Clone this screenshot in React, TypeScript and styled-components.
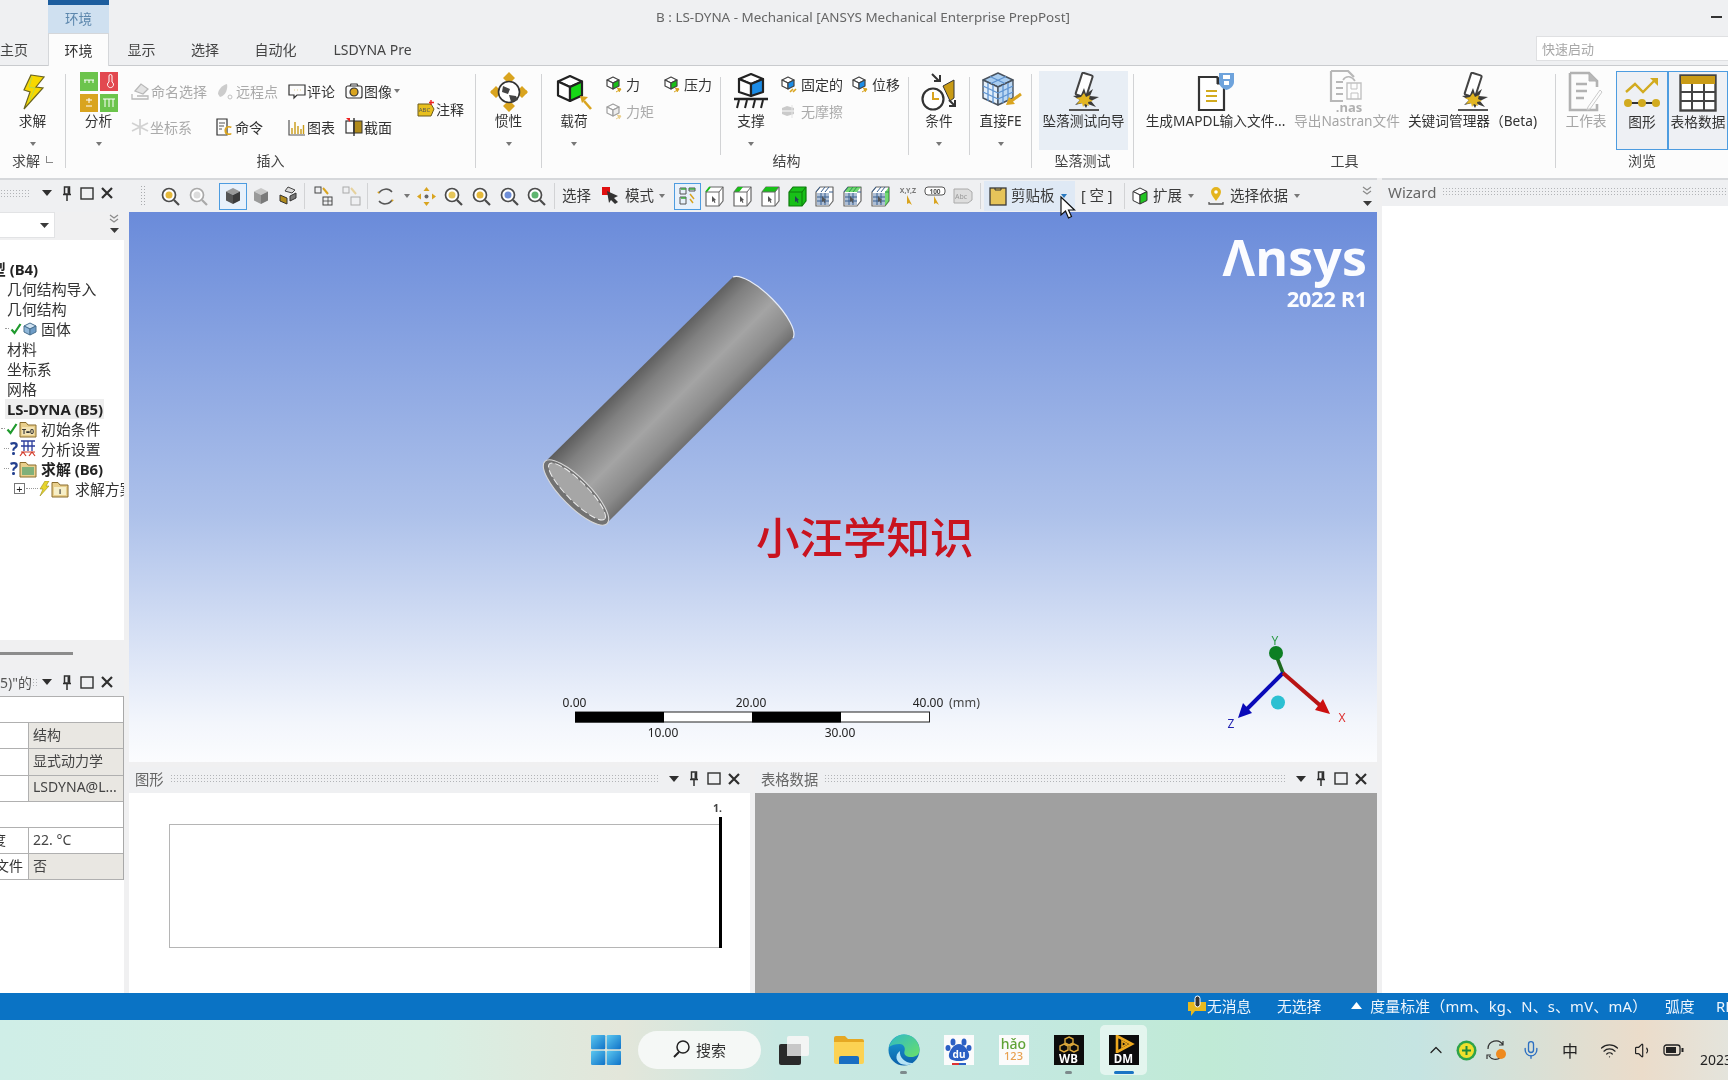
import React from "react";
import styled, { createGlobalStyle } from "styled-components";
import { ChevronUp, Mic, Volume1, Wifi } from "lucide-react";

const FONT = `"Noto Sans", "Noto Sans CJK SC", sans-serif`;

const GlobalStyle = createGlobalStyle`
  html, body { margin: 0; padding: 0; overflow: hidden; background: #eff0f2; }
  * { box-sizing: border-box; }
  body { font-family: ${FONT}; }
  svg { display: block; flex: none; }
`;

/* ---------- page shell ---------- */
const Page = styled.div`
  position: relative;
  width: 1728px;
  height: 1080px;
  display: flex;
  flex-direction: column;
  overflow: hidden;
  background: #eff0f2;
  color: #333;
  filter: blur(0.35px);
`;

const TitleBar = styled.div`
  display: grid;
  grid-template-columns: 48px 61px 1508px 111px;
  height: 33px;
  background: #eff0f2;
`;

const ContextTab = styled.div`
  grid-column: 2;
  display: flex;
  align-items: center;
  justify-content: center;
  padding-bottom: 2px;
  border-top: 5px solid #1c5d9e;
  background: #cfe0f0;
  color: #5d87ad;
  font-size: 13.5px;
`;

const WindowTitle = styled.div`
  display: flex;
  align-items: center;
  justify-content: center;
  color: #666;
  font-size: 13.45px;
`;

const MinDash = styled.div`
  justify-self: end;
  align-self: center;
  width: 11px;
  height: 2px;
  margin-right: 6px;
  background: #333;
`;

const TabRow = styled.div`
  display: flex;
  height: 33px;
  border-bottom: 1px solid #c9cbce;
`;

const Tab = styled.div<{ $w: number; $active?: boolean; $start?: boolean }>`
  width: ${(p) => p.$w}px;
  height: ${(p) => (p.$active ? 33 : 32)}px;
  display: flex;
  align-items: center;
  justify-content: ${(p) => (p.$start ? "flex-start" : "center")};
  font-size: 14px;
  color: #444;
  background: ${(p) => (p.$active ? "#fcfcfc" : "transparent")};
  ${(p) => p.$active && "border: 1px solid #d5d7da; border-bottom: none; color: #333;"}
`;

const QuickStart = styled.div`
  margin: 3px 0 0 auto;
  width: 192px;
  height: 25px;
  padding-left: 5px;
  display: flex;
  align-items: center;
  background: #fff;
  border: 1px solid #dfe0e2;
  border-right: none;
  color: #a8a8a8;
  font-size: 13px;
`;

/* ---------- ribbon ---------- */
const Ribbon = styled.div`
  display: flex;
  height: 112px;
  background: #fcfcfc;
  overflow: hidden;
`;

const RibbonGroup = styled.div<{ $w: number }>`
  width: ${(p) => p.$w}px;
  flex: none;
  display: flex;
  flex-direction: column;
`;

const GroupBody = styled.div`
  display: flex;
  height: 84px;
  padding-top: 5px;
`;

const GroupLabel = styled.div`
  height: 22px;
  padding-bottom: 3px;
  display: flex;
  align-items: center;
  justify-content: center;
  gap: 6px;
  font-size: 14px;
  color: #444;
`;

const RibbonSep = styled.div<{ $short?: boolean }>`
  flex: none;
  width: 1px;
  margin-top: ${(p) => (p.$short ? 6 : 8)}px;
  height: ${(p) => (p.$short ? 78 : 94)}px;
  background: #d2d3d5;
`;

const LargeButton = styled.div<{ $w: number; $ml?: number; $off?: boolean; $hl?: boolean; $sel?: boolean }>`
  width: ${(p) => p.$w}px;
  margin-left: ${(p) => p.$ml ?? 0}px;
  height: 79px;
  flex: none;
  display: flex;
  flex-direction: column;
  align-items: center;
  color: ${(p) => (p.$off ? "#a5a5a5" : "#333")};
  background: ${(p) => (p.$hl ? "#e8eef5" : p.$sel ? "#eef0f4" : "transparent")};
  ${(p) => p.$sel && "border: 1.5px solid #4d9ce0;"}
`;

const LargeIcon = styled.div<{ $off?: boolean }>`
  height: 41px;
  display: flex;
  align-items: center;
  justify-content: center;
  opacity: ${(p) => (p.$off ? 0.5 : 1)};
`;

const LargeText = styled.div`
  height: 20px;
  margin-top: -1px;
  line-height: 20px;
  font-size: 13.7px;
  white-space: nowrap;
`;

const DropCaret = styled.div`
  margin-top: 11px;
  width: 0;
  height: 0;
  border-left: 3.5px solid transparent;
  border-right: 3.5px solid transparent;
  border-top: 4px solid #777;
`;

const SmallGrid = styled.div<{ $cols: string; $row: number; $mt?: number }>`
  display: grid;
  flex: none;
  grid-template-columns: ${(p) => p.$cols};
  grid-auto-rows: ${(p) => p.$row}px;
  margin-top: ${(p) => p.$mt ?? 0}px;
`;

const SmallButton = styled.div<{ $off?: boolean; $gap?: number; $alone?: boolean; $ml?: number }>`
  display: flex;
  align-items: center;
  gap: ${(p) => p.$gap ?? 1}px;
  margin-left: ${(p) => p.$ml ?? 0}px;
  font-size: 14px;
  white-space: nowrap;
  color: ${(p) => (p.$off ? "#aaa" : "#333")};
  ${(p) => p.$alone && "height: 36px; margin-top: 20px; flex: none;"}
  svg { opacity: ${(p) => (p.$off ? 0.5 : 1)}; }
`;

const TinyCaret = styled.span`
  display: inline-block;
  margin-left: 1px;
  width: 0;
  height: 0;
  border-left: 3px solid transparent;
  border-right: 3px solid transparent;
  border-top: 4px solid #777;
`;

const Launcher = styled.span`
  width: 7px;
  height: 7px;
  border-left: 1px solid #888;
  border-bottom: 1px solid #888;
`;

/* ---------- workspace ---------- */
const Workspace = styled.div`
  flex: 1;
  min-height: 0;
  display: flex;
  background: #f0f0f1;
`;

const LeftColumn = styled.div`
  width: 124px;
  flex: none;
  display: flex;
  flex-direction: column;
  overflow: hidden;
`;

const PanelHead = styled.div<{ $h: number; $top?: boolean }>`
  height: ${(p) => p.$h}px;
  flex: none;
  display: flex;
  align-items: center;
  gap: 6px;
  padding: 0 6px 3px 6px;
  background: #eff0f2;
  color: #666;
  font-size: 14.3px;
  white-space: nowrap;
  ${(p) => p.$top && "border-top: 2px solid #d6d8db;"}
`;

const LeftHead = styled(PanelHead)`
  padding: 0 7px 6px 0;
`;

const DotStrip = styled.div`
  flex: 1;
  min-width: 0;
  height: 9px;
  background-image: radial-gradient(#b2b4b7 0.8px, transparent 1px);
  background-size: 3px 3px;
`;

const DockGroup = styled.div`
  display: flex;
  align-items: center;
  flex: none;
`;

const DockSlot = styled.div`
  width: 20px;
  display: flex;
  justify-content: center;
  color: #2f2f2f;
`;

const FilterRow = styled.div`
  height: 28px;
  flex: none;
  display: flex;
  justify-content: space-between;
`;

const FilterBox = styled.div`
  width: 55px;
  height: 26px;
  display: flex;
  align-items: center;
  justify-content: flex-end;
  padding-right: 5px;
  background: #fff;
  border: 1px solid #e2e3e5;
  border-left: none;
`;

const ChevronColumn = styled.div`
  width: 20px;
  display: flex;
  flex-direction: column;
  align-items: center;
  justify-content: flex-start;
  gap: 5px;
  padding-top: 2px;
`;

const Tree = styled.div`
  height: 400px;
  flex: none;
  padding-top: 18.5px;
  background: #fff;
  overflow: hidden;
`;

const TreeRow = styled.div<{ $pad?: number; $bold?: boolean }>`
  height: 20px;
  display: flex;
  align-items: center;
  margin-left: ${(p) => p.$pad ?? 0}px;
  font-size: 14.9px;
  font-weight: ${(p) => (p.$bold ? 700 : 400)};
  color: ${(p) => (p.$bold ? "#222" : "#333")};
  white-space: nowrap;
`;

const TreeHighlight = styled.span`
  margin-left: -2px;
  padding: 0 2px;
  background: #eeeeee;
  width: 99px;
`;

const TreeIcons = styled.div<{ $w: number; $pr?: number }>`
  width: ${(p) => p.$w}px;
  flex: none;
  display: flex;
  align-items: center;
  justify-content: flex-end;
  gap: 1px;
  padding-right: ${(p) => p.$pr ?? 4}px;
`;

const TreeDots = styled.span<{ $w: number }>`
  flex: none;
  width: ${(p) => p.$w}px;
  border-top: 1px dotted #9a9a9a;
`;

const TreeExpand = styled.span`
  flex: none;
  width: 11px;
  height: 11px;
  display: flex;
  align-items: center;
  justify-content: center;
  border: 1px solid #777;
  font-size: 11px;
  font-weight: 400;
  line-height: 1;
  color: #222;
  background: #fff;
`;

const Status = styled.span<{ $c: string }>`
  color: ${(p) => p.$c};
  font-weight: 700;
  font-size: 17px;
  line-height: 1;
`;

const ScrollStrip = styled.div`
  height: 30px;
  flex: none;
  padding-top: 12px;
`;

const ScrollThumb = styled.div`
  width: 73px;
  height: 2.5px;
  background: #8c8c8c;
`;

const PropHead = styled(LeftHead)`
  padding-bottom: 2px;
  color: #555;
  font-size: 14px;
  gap: 0;
  overflow: hidden;
`;

const PropTable = styled.div`
  flex: none;
  border-top: 1px solid #b0b0b0;
  border-right: 1px solid #a8a8a8;
  width: 124px;
`;

const PropRow = styled.div`
  display: flex;
  height: 26.2px;
  border-bottom: 1px solid #b0b0b0;
  font-size: 14px;
`;

const PropName = styled.div<{ $pr?: number }>`
  width: 29px;
  flex: none;
  display: flex;
  align-items: center;
  justify-content: flex-end;
  padding-right: ${(p) => p.$pr ?? 5}px;
  padding-bottom: 3px;
  background: #fff;
  border-right: 1px solid #b0b0b0;
  white-space: nowrap;
  overflow: hidden;
`;

const PropValue = styled.div<{ $shade?: boolean }>`
  flex: 1;
  display: flex;
  align-items: center;
  padding-left: 4px;
  padding-bottom: 3px;
  background: ${(p) => (p.$shade ? "#e9e7e2" : "#fff")};
  white-space: nowrap;
  overflow: hidden;
  color: #444;
`;

const PropBlank = styled.div`
  flex: 1;
  background: #fff;
`;

const CenterColumn = styled.div`
  width: 1253px;
  flex: none;
  display: flex;
  flex-direction: column;
`;

const Toolbar = styled.div`
  height: 34px;
  flex: none;
  display: flex;
  align-items: center;
  background: #eff0f2;
  border-top: 2px solid #d6d8db;
  font-size: 14.5px;
  color: #3a3a3a;
`;

const Grip = styled.div`
  width: 32px;
  height: 22px;
  flex: none;
  padding: 0 9px 0 16px;
  background-image: radial-gradient(#a9abae 0.8px, transparent 1px);
  background-size: 3px 3px;
  background-origin: content-box;
  background-clip: content-box;
`;

const Tool = styled.div<{ $w?: number; $ml?: number; $sel?: boolean }>`
  width: ${(p) => p.$w ?? 28}px;
  height: 27px;
  flex: none;
  margin-left: ${(p) => p.$ml ?? 0}px;
  display: flex;
  align-items: center;
  justify-content: center;
  ${(p) => p.$sel && "background: #e8f1fb; border: 1.5px solid #4d9ce0;"}
`;

const ToolSep = styled.div<{ $ml?: number }>`
  width: 1px;
  height: 26px;
  flex: none;
  margin-left: ${(p) => p.$ml ?? 0}px;
  background: #d2d3d5;
`;

const ToolText = styled.div<{ $w: number; $ml?: number }>`
  width: ${(p) => p.$w}px;
  flex: none;
  margin-left: ${(p) => p.$ml ?? 0}px;
  padding-bottom: 3px;
  white-space: nowrap;
`;

const ClipboardButton = styled.div`
  width: 91px;
  height: 30px;
  flex: none;
  margin-left: 3px;
  padding-left: 5px;
  display: flex;
  align-items: center;
  gap: 4px;
  background: #dfe9f5;
  white-space: nowrap;
`;

const ClipLabel = styled.span`
  padding-bottom: 3px;
`;

const ToolCaret = styled(TinyCaret)`
  border-top-color: #2878c0;
  margin-left: 2px;
`;

const ToolbarEnd = styled.div`
  margin-left: 1px;
  width: 20px;
  flex: none;
  display: flex;
  flex-direction: column;
  align-items: center;
  gap: 6px;
`;

const CenterBody = styled.div`
  flex: 1;
  min-height: 0;
  padding-left: 5px;
  display: flex;
  flex-direction: column;
  gap: 5px;
`;

const Viewport = styled.div`
  position: relative;
  height: 550px;
  flex: none;
  overflow: hidden;
  background: linear-gradient(#6a8bda 0%, #adc1ea 55%, #f3f6fc 93%, #fbfcfe 100%);
`;

const Scene = styled.svg`
  position: absolute;
  inset: 0;
`;

const BrandMark = styled.div`
  position: absolute;
  top: 16px;
  right: 10px;
  display: flex;
  flex-direction: column;
  align-items: flex-end;
  color: #fbfcff;
  font-family: "Open Sans", sans-serif;
  font-weight: 700;
`;

const BrandName = styled.div`
  font-size: 50px;
  line-height: 58px;
  letter-spacing: 0.2px;
`;

const BrandRelease = styled.div`
  font-size: 22px;
  line-height: 24px;
  letter-spacing: -0.4px;
`;

const Watermark = styled.div`
  position: absolute;
  left: 627px;
  top: 298px;
  color: #c9131f;
  font-family: "Noto Sans CJK SC", sans-serif;
  font-weight: 500;
  font-size: 43.5px;
  line-height: 52px;
  white-space: nowrap;
`;

const BottomRow = styled.div`
  flex: 1;
  min-height: 0;
  display: flex;
  gap: 5px;
`;

const BottomPanel = styled.div<{ $w: number }>`
  width: ${(p) => p.$w}px;
  flex: none;
  display: flex;
  flex-direction: column;
`;

const PanelBodyGraph = styled.div`
  flex: 1;
  background: #fff;
  padding: 31px 0 0 40px;
`;

const PlotFrame = styled.div`
  position: relative;
  width: 551px;
  height: 124px;
  border: 1.5px solid #b5b5b5;
  border-right: none;
`;

const PlotLimit = styled.div`
  position: absolute;
  right: -2px;
  top: -8px;
  bottom: -1px;
  width: 3px;
  background: #000;
`;

const PlotTick = styled.div`
  position: absolute;
  right: -2px;
  top: -24px;
  font-size: 10.5px;
  font-weight: 700;
  color: #444;
`;

const PanelBodyGrey = styled.div`
  flex: 1;
  background: #a0a0a0;
`;

const RightColumn = styled.div`
  flex: 1;
  min-width: 0;
  margin-left: 5px;
  display: flex;
  flex-direction: column;
`;

const WizardHead = styled(PanelHead)`
  padding-right: 0;
  font-size: 15px;
  border-top: 2px solid #d6d8db;
`;

const WizardBody = styled.div`
  flex: 1;
  background: #fff;
`;

/* ---------- status bar and taskbar ---------- */
const StatusBar = styled.div`
  height: 27px;
  flex: none;
  display: flex;
  align-items: center;
  padding: 0 0 2px 1187px;
  background: #0a73c5;
  color: #eef5fc;
  font-size: 14.8px;
  white-space: nowrap;
`;

const StatusItem = styled.div<{ $ml?: number; $w?: number; $ls?: number }>`
  display: flex;
  align-items: center;
  flex: none;
  margin-left: ${(p) => p.$ml ?? 0}px;
  letter-spacing: ${(p) => p.$ls ?? 0}px;
  ${(p) => p.$w && `width: ${p.$w}px;`}
`;

const Taskbar = styled.div`
  height: 60px;
  flex: none;
  display: flex;
  align-items: center;
  padding-left: 578px;
  background: linear-gradient(90deg, #cfeee7 0%, #d8efe3 25%, #e3e6da 36%, #c8e8e2 45%, #c4e8e1 58%, #c0ead6 70%, #c5e4e2 82%, #ebdcca 95%, #e4e4dc 100%);
`;

const TaskSlot = styled.div<{ $active?: boolean }>`
  position: relative;
  width: 55px;
  height: 50px;
  flex: none;
  display: flex;
  align-items: center;
  justify-content: center;
  &::before {
    content: "";
    position: absolute;
    inset: 0 4px;
    border-radius: 5px;
    ${(p) => p.$active && "background: rgba(255,255,255,.55);"}
  }
  > * { position: relative; }
`;

const TaskDot = styled.div<{ $active?: boolean }>`
  position: absolute !important;
  left: 50%;
  bottom: 1px;
  width: ${(p) => (p.$active ? 20 : 7)}px;
  height: 3px;
  margin-left: ${(p) => (p.$active ? -10 : -3.5)}px;
  border-radius: 2px;
  background: ${(p) => (p.$active ? "#1a74c4" : "#7d8a8c")};
`;

const SearchPill = styled.div`
  width: 123px;
  height: 38px;
  flex: none;
  margin: 0 5px 0 5px;
  padding: 0 0 2px 35px;
  display: flex;
  align-items: center;
  gap: 6px;
  border-radius: 19px;
  background: #f5f8f6;
  color: #333;
  font-size: 15px;
`;

const Tray = styled.div`
  margin-left: 270px;
  display: flex;
  align-items: center;
  flex: none;
`;

const TrayItem = styled.div<{ $w: number }>`
  width: ${(p) => p.$w}px;
  flex: none;
  display: flex;
  justify-content: center;
  align-items: center;
  color: #222;
  font-size: 16px;
`;

const Clock = styled.div`
  margin-left: 11px;
  font-size: 14px;
  color: #222;
  white-space: nowrap;
  padding-top: 18px;
`;

const Cursor = styled.svg`
  position: absolute;
  left: 1060px;
  top: 196px;
`;

/* ---------- drawings: dock + tree ---------- */
function Pin() {
  return (
    <svg width="10" height="15" viewBox="0 0 10 15" fill="none" stroke="currentColor">
      <path d="M2.5 1h5v7h-5zM1 8.5h8M5 9v6" strokeWidth="1.5" />
      <path d="M6.3 1.5v6" strokeWidth="1.5" />
    </svg>
  );
}

function DockControls() {
  return (
    <DockGroup>
      <DockSlot>
        <svg width="10" height="6" viewBox="0 0 10 6"><path d="M0 0h10L5 6z" fill="currentColor" /></svg>
      </DockSlot>
      <DockSlot><Pin /></DockSlot>
      <DockSlot>
        <svg width="14" height="13" viewBox="0 0 14 13" fill="none" stroke="currentColor" strokeWidth="1.4"><rect x="1" y="1" width="12" height="11" /></svg>
      </DockSlot>
      <DockSlot>
        <svg width="12" height="12" viewBox="0 0 12 12" stroke="currentColor" strokeWidth="2.2"><path d="M1 1l10 10M11 1L1 11" /></svg>
      </DockSlot>
    </DockGroup>
  );
}

function Chevrons() {
  return (
    <svg width="10" height="9" viewBox="0 0 10 9" fill="none" stroke="#8a8a8a" strokeWidth="1.2">
      <path d="M1 1l4 3 4-3M1 5l4 3 4-3" />
    </svg>
  );
}

function Caret() {
  return <svg width="9" height="5" viewBox="0 0 9 5"><path d="M0 0h9L4.5 5z" fill="#3a3a3a" /></svg>;
}

function Check() {
  return (
    <svg width="12" height="12" viewBox="0 0 12 12" fill="none" stroke="#1f9a2d" strokeWidth="2.2">
      <path d="M1.5 6.5l3 3.5 6-9" />
    </svg>
  );
}

function SolidCube() {
  return (
    <svg width="14" height="14" viewBox="0 0 14 14" stroke="#49708f" strokeWidth="1">
      <path d="M7 1l6 3-6 3-6-3z" fill="#cfe2f2" />
      <path d="M1 4l6 3v6l-6-3z" fill="#8fb6d8" />
      <path d="M13 4L7 7v6l6-3z" fill="#6e9cc6" />
    </svg>
  );
}

function TreeFolder({ accent, glyph }: { accent: string; glyph?: string }) {
  return (
    <svg width="18" height="18" viewBox="0 0 18 18">
      <path d="M1 5V2.5h6L9 5h8v12H1z" fill="#e9cf8c" stroke="#8a6d2d" />
      <rect x="3" y="7" width="12" height="8" fill={accent} />
      {glyph && <text x="9" y="14" fontSize="7" fontWeight="700" textAnchor="middle" fill="#333" fontFamily="Noto Sans">{glyph}</text>}
    </svg>
  );
}

function SettingsGrid() {
  return (
    <svg width="18" height="18" viewBox="0 0 18 18" fill="none">
      <path d="M2 1h14M5 1v10M9 1v10M13 1v10M2 6h14" stroke="#2b3d9c" strokeWidth="1.3" />
      <path d="M2 12h14M1 16l3-4 3 4M10 16l3-4 3 4" stroke="#d23a2a" strokeWidth="1.2" />
    </svg>
  );
}

function BoltSmall() {
  return (
    <svg width="11" height="15" viewBox="0 0 11 15"><path d="M6 0h4L7 5h3L1 15l3-7H1z" fill="#e7d52c" stroke="#9a8f20" strokeWidth=".6" /></svg>
  );
}

/* ---------- drawings: ribbon large ---------- */
function Bolt() {
  return (
    <svg width="24" height="36" viewBox="0 0 24 36">
      <path d="M10 1l13 2-8 10 7 1L3 35l6-17-6-2z" fill="#f8d800" stroke="#6a6420" strokeWidth="1.2" />
      <path d="M11 3l-3 10 6 1-6 14" fill="none" stroke="#b8d84a" strokeWidth="1" />
    </svg>
  );
}

function AnalysisGrid() {
  return (
    <svg width="38" height="40" viewBox="0 0 38 40" fill="none">
      <rect x="0" y="0" width="18" height="19" fill="#6cc44c" />
      <rect x="20" y="0" width="18" height="19" fill="#e2484f" />
      <rect x="0" y="22" width="18" height="18" fill="#d9a41f" />
      <rect x="20" y="22" width="18" height="18" fill="#6cc44c" />
      <path d="M4 8h10M5 8v3M9 8v3M13 8v3" stroke="#fff" />
      <path d="M29 4a1.5 1.5 0 013 0v6a3 3 0 11-3 0z" stroke="#fff" />
      <path d="M6 28h6M9 26v5M6 34h6" stroke="#fff" />
      <path d="M23 27h12M25 27v8M29 27v8M33 27v8" stroke="#fff" />
    </svg>
  );
}

function Inertia() {
  return (
    <svg width="38" height="40" viewBox="0 0 38 40">
      <path d="M19 2v36M1 20h36" stroke="#d9a41f" strokeWidth="3" />
      <path d="M19 0l6 6-6 6-6-6zM19 28l6 6-6 6-6-6zM0 20l6-6 6 6-6 6zM38 20l-6-6-6 6 6 6z" fill="#d9a41f" />
      <circle cx="19" cy="20" r="10.500" fill="#fff" stroke="#333" strokeWidth="1.6" />
      <path d="M13 14l7 3-2 5-6-2zM19 23l7 1 2 4-7 2z" fill="#444" />
    </svg>
  );
}

function LoadCube() {
  return (
    <svg width="36" height="36" viewBox="0 0 36 36" strokeLinejoin="round">
      <path d="M14 2l12 5.500L14 13 2 7.500z" fill="#fff" stroke="#222" strokeWidth="2.200" />
      <path d="M2 7.500L14 13v14L2 21.500z" fill="#fff" stroke="#222" strokeWidth="2.200" />
      <path d="M26 7.500L14 13v14l12-5.500z" fill="#16d816" stroke="#222" strokeWidth="2.200" />
      <path d="M35 35l-7-8" stroke="#d9a41f" strokeWidth="2.600" />
      <path d="M24 22l8 1-6 6z" fill="#d9a41f" />
    </svg>
  );
}

function SupportCube() {
  return (
    <svg width="36" height="38" viewBox="0 0 36 38" strokeLinejoin="round">
      <path d="M18 1l12 5-12 5L6 6z" fill="#fff" stroke="#222" strokeWidth="2.2" />
      <path d="M6 6l12 5v12L6 19z" fill="#fff" stroke="#222" strokeWidth="2.2" />
      <path d="M30 6l-12 5v12l12-4z" fill="#1c8ce6" stroke="#222" strokeWidth="2.2" />
      <path d="M1 26h34" stroke="#222" strokeWidth="2.4" />
      <path d="M6 27l-2 8M14 27l-2 8M22 27l-2 8M30 27l-2 8" stroke="#222" strokeWidth="2" />
    </svg>
  );
}

function Conditions() {
  return (
    <svg width="36" height="40" viewBox="0 0 36 40" fill="none">
      <path d="M22 14l11-6v18l-4 3z" fill="#c99b16" stroke="#333" />
      <path d="M11 2l7 7M13 9h6V3" stroke="#333" strokeWidth="2" />
      <circle cx="12" cy="27" r="10.5" fill="#fff" stroke="#333" strokeWidth="2.2" />
      <path d="M12 20v7h6" stroke="#d9a41f" strokeWidth="2" />
      <path d="M28 28l6 6M34 28v6h-6" stroke="#333" strokeWidth="2" />
    </svg>
  );
}

function DirectFe() {
  return (
    <svg width="42" height="40" viewBox="0 0 42 40" fill="none" strokeLinejoin="round">
      <path d="M18 1l15 7-15 7L3 8z" fill="#a9cdf0" stroke="#48525e" strokeWidth="1.4" />
      <path d="M3 8l15 7v18L3 26z" fill="#e3effa" stroke="#48525e" strokeWidth="1.4" />
      <path d="M33 8l-15 7v18l15-7z" fill="#bcd8f3" stroke="#48525e" strokeWidth="1.4" />
      <path d="M10 4.5l15 7M26 4.5l-15 7M8 11v18M13 13v18M23 13v18M28 11v18M3 14l15 7 15-7M3 20l15 7 15-7" stroke="#5d92d0" strokeWidth="1.3" />
      <path d="M41 22L30 30" stroke="#d9a41f" strokeWidth="3" />
      <path d="M26 33l3-8 6 7z" fill="#d9a41f" />
    </svg>
  );
}

function DropTest() {
  return (
    <svg width="36" height="40" viewBox="0 0 36 40" fill="none">
      <rect x="13" y="1.5" width="11" height="23" rx="1.5" transform="rotate(18 18 12)" fill="#fff" stroke="#444" strokeWidth="2" />
      <path d="M18 16l2 6 7-5-3 7 9 1-8 4 5 6-8-3-2 4-3-5-8 2 5-5-7-4 8-1z" fill="#3c3c3c" />
      <path d="M18 21l2 4 4-2-1 4 4 2-5 1 1 4-4-2-2 3-1-4-5 1 3-4-4-2 5-1z" fill="#e2b521" />
      <path d="M3 38h30" stroke="#555" strokeWidth="2" />
    </svg>
  );
}

function MapdlDoc() {
  return (
    <svg width="38" height="40" viewBox="0 0 38 40" fill="none">
      <path d="M2 5h18l7 7v26H2z" fill="#fff" stroke="#333" strokeWidth="2.2" />
      <path d="M20 5v7h7" fill="#333" stroke="#333" />
      <path d="M9 19h11M9 24h11M9 29h11" stroke="#d2ab1f" strokeWidth="2.2" />
      <path d="M22 1h15v9c0 4-4 7-7.500 8C26 17 22 14 22 10z" fill="#6ea3dc" />
      <path d="M26 3h7v4h-7zM27 9h5v4h-5z" fill="#fff" />
    </svg>
  );
}

function NasDoc() {
  return (
    <svg width="38" height="44" viewBox="0 0 38 44" fill="none">
      <path d="M3 1h17l6 6M3 1v30h12" stroke="#777" strokeWidth="2.2" />
      <path d="M8 12h7M8 18h7M8 24h7" stroke="#777" strokeWidth="2" />
      <path d="M15 10c3-5 9-4 12 1" stroke="#777" strokeWidth="1.6" />
      <path d="M19 13h14v16H19z" stroke="#888" strokeWidth="1.4" fill="#fff" />
      <path d="M23 13v6h6v-6M23 29v-6h7v6" stroke="#888" />
      <text x="21" y="42" fontSize="13" fontWeight="700" textAnchor="middle" fill="#666" fontFamily="Noto Sans">.nas</text>
    </svg>
  );
}

function WorksheetDoc() {
  return (
    <svg width="36" height="42" viewBox="0 0 36 42" fill="none">
      <path d="M2 2h19l8 8v6M2 2v37h27v-6" stroke="#6a6a6a" strokeWidth="2.6" />
      <path d="M21 2v8h8" fill="#777" stroke="#6a6a6a" />
      <path d="M8 13h11M8 20h11M8 27h8" stroke="#6a6a6a" strokeWidth="2.4" />
      <path d="M20 36l12-17 2 2-12 17-3 1z" stroke="#999" />
    </svg>
  );
}

function TrendChart() {
  return (
    <svg width="38" height="36" viewBox="0 0 38 36" fill="none">
      <path d="M3 17l9-8 8 8L33 4" stroke="#d2ab1f" strokeWidth="2.4" />
      <path d="M27 3h8v8z" fill="#d2ab1f" />
      <path d="M3 28h32" stroke="#333" strokeWidth="2" />
      <circle cx="5" cy="28" r="4" fill="#d2ab1f" />
      <circle cx="19" cy="28" r="4" fill="#d2ab1f" />
      <circle cx="33" cy="28" r="4" fill="#d2ab1f" />
    </svg>
  );
}

function DataTable() {
  return (
    <svg width="38" height="38" viewBox="0 0 38 38" fill="none">
      <rect x="1.500" y="1.500" width="35" height="35" fill="#fff" stroke="#444" strokeWidth="2.4" />
      <rect x="2" y="2" width="34" height="8" fill="#c99b16" />
      <path d="M13 10v26M25 10v26M2 18h34M2 27h34" stroke="#444" strokeWidth="2" />
    </svg>
  );
}

/* ---------- drawings: ribbon small ---------- */
function NamedSel() {
  return (
    <svg width="19" height="19" viewBox="0 0 19 19" fill="none" stroke="#777" strokeWidth="1.3">
      <path d="M4 9l6-7 7 5-5 5z" fill="#ccc" />
      <path d="M1 12v5h16v-3H6" />
    </svg>
  );
}
function RemotePoint() {
  return (
    <svg width="19" height="18" viewBox="0 0 19 18">
      <path d="M2 12c0-5 5-9 9-10 1 4-1 12-7 13z" fill="#9d9d9d" />
      <circle cx="14" cy="15" r="2" fill="none" stroke="#888" />
    </svg>
  );
}
function CommentIcon() {
  return (
    <svg width="18" height="17" viewBox="0 0 18 17" fill="none" stroke="#333" strokeWidth="1.2">
      <path d="M1 2h16v10H9l-3 3v-3H1z" />
      <path d="M6 7h.5M9 7h.5M12 7h.5" stroke="#c9a21f" />
    </svg>
  );
}
function CameraIcon() {
  return (
    <svg width="18" height="16" viewBox="0 0 18 16" fill="none" stroke="#333" strokeWidth="1.2">
      <rect x="1" y="3" width="16" height="12" rx="2" />
      <circle cx="9" cy="9" r="4" fill="#d9a41f" />
      <path d="M5 3l1-2h6l1 2" />
    </svg>
  );
}
function CoordIcon() {
  return (
    <svg width="18" height="18" viewBox="0 0 18 18" stroke="#aaa" strokeWidth="1.8">
      <path d="M9 1v16M1 5l16 8M1 13l16-8" />
    </svg>
  );
}
function CommandIcon() {
  return (
    <svg width="18" height="18" viewBox="0 0 18 18" fill="none">
      <path d="M1 1h10v16H1z" stroke="#333" strokeWidth="1.2" />
      <path d="M3 5h6M3 8h5M3 11h3" stroke="#555" />
      <text x="12" y="17" fontSize="13" fontWeight="700" textAnchor="middle" fill="#dba51f" fontFamily="Noto Sans">C</text>
    </svg>
  );
}
function BarsIcon() {
  return (
    <svg width="17" height="17" viewBox="0 0 17 17" fill="none">
      <path d="M1 1v15h16" stroke="#555" strokeWidth="1.2" />
      <path d="M4 15V9M7 15V3M10 15V7M13 15V10M15.500 15V6" stroke="#c99b16" strokeWidth="1.4" />
    </svg>
  );
}
function SectionIcon() {
  return (
    <svg width="18" height="18" viewBox="0 0 18 18" fill="none">
      <rect x="1" y="3" width="8" height="12" stroke="#333" strokeWidth="1.2" />
      <rect x="9" y="3" width="8" height="12" fill="#b08b1c" stroke="#333" />
      <path d="M9 0v18" stroke="#333" strokeWidth="1.4" />
      <path d="M1 0h4v4z" fill="#e22" />
    </svg>
  );
}
function NoteIcon() {
  return (
    <svg width="18" height="18" viewBox="0 0 18 18">
      <path d="M1 4h13l3 5-3 7H1z" fill="#e8c01e" stroke="#6a5a20" />
      <text x="7.500" y="12" fontSize="6" textAnchor="middle" fill="#555" fontFamily="Noto Sans">ABC</text>
      <path d="M14 0v5M12 2.500h5" stroke="#e22" strokeWidth="1.4" />
    </svg>
  );
}
function SmallCube({ face, dash }: { face: string; dash?: boolean }) {
  return (
    <svg width="17" height="17" viewBox="0 0 17 17" strokeLinejoin="round">
      <path d="M7 1l6 3-6 3-6-3z" fill="#fff" stroke="#444" strokeWidth="1.2" />
      <path d="M1 4l6 3v6l-6-3z" fill="#fff" stroke="#444" strokeWidth="1.2" />
      <path d="M13 4L7 7v6l6-3z" fill={face} stroke="#444" strokeWidth="1.2" />
      {dash ? (
        <path d="M9 16l3-3M12 16l3-3" stroke="#d9a41f" strokeWidth="1.6" />
      ) : (
        <path d="M10 16l5-3M11 12l4 1-2 3" fill="#d9a41f" stroke="#d9a41f" />
      )}
    </svg>
  );
}
function FrictionlessIcon() {
  return (
    <svg width="17" height="15" viewBox="0 0 17 15">
      <path d="M6 2l7 2v6l-7 2-5-2V4z" fill="#999" />
      <path d="M0 7h16" stroke="#fff" />
      <path d="M11 1v13" stroke="#ccc" />
    </svg>
  );
}

/* ---------- drawings: toolbar ---------- */
function Mag({ dot, off }: { dot: string; off?: boolean }) {
  const c = off ? "#a9a9a9" : "#4b4b4b";
  return (
    <svg width="19" height="19" viewBox="0 0 19 19" fill="none">
      <circle cx="8" cy="8" r="6.500" fill="#fff" stroke={c} strokeWidth="1.7" />
      <circle cx="8" cy="8" r="3.500" fill={dot} />
      <path d="M13 13l5 5" stroke={c} strokeWidth="2.2" />
    </svg>
  );
}
function BoxShade({ a, b, c }: { a: string; b: string; c: string }) {
  return (
    <svg width="18" height="18" viewBox="0 0 18 18" strokeLinejoin="round">
      <path d="M9 1l7 3.500L9 8 2 4.500z" fill={a} />
      <path d="M2 4.500L9 8v9l-7-3.500z" fill={b} />
      <path d="M16 4.500L9 8v9l7-3.500z" fill={c} />
    </svg>
  );
}
function ExplodeBox() {
  return (
    <svg width="20" height="20" viewBox="0 0 20 20">
      <path d="M10 1l7 3-3 3-7-2z" fill="#ddd" stroke="#444" />
      <path d="M2 9l7 3v6l-7-3z" fill="#b08b1c" stroke="#333" />
      <path d="M12 10l6-3v5l-6 3z" fill="#777" stroke="#333" />
    </svg>
  );
}
function FitIcon({ off }: { off?: boolean }) {
  const c = off ? "#aaa" : "#444";
  return (
    <svg width="19" height="20" viewBox="0 0 19 20" fill="none">
      <rect x="1" y="1" width="6" height="6" stroke={c} />
      <rect x="9" y="11" width="9" height="8" stroke={c} />
      <path d="M14 11v8M9 15h9" stroke={c} strokeWidth=".8" opacity={off ? 0 : 1} />
      <path d="M9 2l5 6" stroke="#d9a41f" strokeWidth="2" opacity={off ? 0.4 : 1} />
    </svg>
  );
}
function RotateIcon() {
  return (
    <svg width="19" height="19" viewBox="0 0 19 19" fill="none" stroke="#555" strokeWidth="1.5">
      <path d="M16 5a8 8 0 00-13 1M3 14a8 8 0 0013-1" />
      <path d="M2 6l1-1M16 13l1 1" stroke="#d9a41f" strokeWidth="2" />
    </svg>
  );
}
function PanIcon() {
  return (
    <svg width="19" height="19" viewBox="0 0 19 19">
      <circle cx="9.500" cy="9.500" r="2" fill="#666" />
      <path d="M9.500 0l3 4h-6zM9.500 19l3-4h-6zM0 9.500l4-3v6zM19 9.500l-4-3v6z" fill="#d9a41f" />
    </svg>
  );
}
function PickMode() {
  return (
    <svg width="17" height="18" viewBox="0 0 17 18">
      <rect x="0" y="0" width="8" height="8" fill="#e01010" />
      <path d="M5 4l11 5-4 2 4 4-3 2-4-4-2 3z" fill="#333" />
    </svg>
  );
}
function NodeFaces() {
  return (
    <svg width="20" height="20" viewBox="0 0 20 20" fill="none" stroke="#555">
      <path d="M2 2h6v6H2zM11 2h6v3h-6zM2 11h6v7H2z" />
      <path d="M3 3h5M11 3h6M3 12h5" stroke="#3aa63a" strokeWidth="1.6" />
      <path d="M12 8l4 5M12 13l3 4" stroke="#d9a41f" strokeWidth="1.5" />
    </svg>
  );
}
function FaceBox({ mode }: { mode: "edge" | "side" | "top" | "solid" | "mesh1" | "mesh2" | "mesh3" }) {
  const green = "#18c018";
  const mesh = mode.startsWith("mesh");
  return (
    <svg width="20" height="21" viewBox="0 0 20 21" strokeLinejoin="round">
      <path d="M5 1h13v14l-4 5H1V6z" fill={mode === "solid" ? green : "#fff"} stroke={mode === "solid" ? "#0d7a0d" : "#666"} strokeWidth="1.2" />
      {mode === "edge" && <path d="M5 1L1 6" stroke={green} strokeWidth="2" />}
      {mode === "side" && <path d="M1 6l4-5h5L6 6z" fill={green} />}
      {mode === "top" && <path d="M1 6l4-5h13l-4 5z" fill={green} />}
      {mesh && <rect x="2" y="7" width="12" height="12" fill="#aebfd6" />}
      {mesh && <path d="M6 7v12M10 7v12M2 11h12M2 15h12M5 1L1 6M10 1L6 6M14 1l-4 5M14 6h4" stroke="#3a6090" strokeWidth="1" fill="none" />}
      {mode === "mesh2" && <path d="M2 6h12l4-5H5z" fill={green} opacity=".6" />}
      {mode === "mesh3" && <path d="M14 6l4-5v14l-4 5z" fill={green} opacity=".6" />}
      {!mesh && <path d="M1 6h13v14M14 6l4-5" fill="none" stroke={mode === "solid" ? "#0d7a0d" : "#666"} />}
      <path d="M7 10l4 4-1.500.5 1 2-1 .5-1-2L7 16z" fill={mode === "solid" ? "#245" : "#555"} />
    </svg>
  );
}
function PointProbe({ label }: { label: string }) {
  return (
    <svg width="24" height="20" viewBox="0 0 24 20">
      <text x="12" y="7" fontSize="7" textAnchor="middle" fill="#777" fontFamily="Noto Sans" fontWeight="700">{label}</text>
      <path d="M11 9l5 10-3-2-2 1z" fill="#d9a41f" />
    </svg>
  );
}
function ProbeTag() {
  return (
    <svg width="22" height="20" viewBox="0 0 22 20">
      <rect x="1" y="1" width="20" height="8" rx="3" fill="#fff" stroke="#555" />
      <text x="11" y="7.500" fontSize="6.500" textAnchor="middle" fill="#555" fontFamily="Noto Sans" fontWeight="700">100</text>
      <path d="M10 10l5 9-3-2-2 1z" fill="#d9a41f" />
    </svg>
  );
}
function LabelTag() {
  return (
    <svg width="20" height="20" viewBox="0 0 20 20" fill="#ddd" stroke="#aaa">
      <path d="M1 3h14l4 3v8l-4 3H1z" />
      <text x="8" y="13" fontSize="7" textAnchor="middle" fill="#999" stroke="none" fontFamily="Noto Sans">Abc</text>
    </svg>
  );
}
function ClipboardIcon() {
  return (
    <svg width="18" height="19" viewBox="0 0 18 19">
      <rect x="1" y="1" width="16" height="17" fill="#e6c45a" stroke="#3a3a3a" strokeWidth="1.3" />
      <path d="M6 1v2h6V1" fill="none" stroke="#333" />
    </svg>
  );
}
function ExtendCube() {
  return (
    <svg width="18" height="18" viewBox="0 0 18 18" strokeLinejoin="round">
      <path d="M9 1l7 3.500L9 8 2 4.500z" fill="#fff" stroke="#333" />
      <path d="M2 4.500L9 8v9l-7-3.500z" fill="#fff" stroke="#333" />
      <path d="M16 4.500L9 8v9l7-3.500z" fill="#22c422" stroke="#333" />
    </svg>
  );
}
function LocationPin() {
  return (
    <svg width="16" height="20" viewBox="0 0 16 20" fill="none">
      <path d="M8 1a5 5 0 015 5c0 3-3 6-5 9-2-3-5-6-5-9a5 5 0 015-5z" fill="#e4b41e" />
      <circle cx="8" cy="6" r="1.800" fill="#fff" />
      <path d="M1 16v2h14v-2" stroke="#555" strokeWidth="1.3" />
    </svg>
  );
}

/* ---------- drawings: taskbar ---------- */
function StartLogo() {
  return (
    <svg width="30" height="30" viewBox="0 0 30 30">
      <defs>
        <linearGradient id="win" x1="0" y1="0" x2="1" y2="1">
          <stop offset="0" stopColor="#5cc8f0" />
          <stop offset="1" stopColor="#0f72c8" />
        </linearGradient>
      </defs>
      <rect x="0" y="0" width="14.300" height="14.300" rx="1.200" fill="url(#win)" />
      <rect x="15.700" y="0" width="14.300" height="14.300" rx="1.200" fill="url(#win)" />
      <rect x="0" y="15.700" width="14.300" height="14.300" rx="1.200" fill="url(#win)" />
      <rect x="15.700" y="15.700" width="14.300" height="14.300" rx="1.200" fill="url(#win)" />
    </svg>
  );
}
function SearchGlass() {
  return (
    <svg width="17" height="18" viewBox="0 0 17 18" fill="none" stroke="#222" strokeWidth="1.500">
      <circle cx="10" cy="7" r="6" />
      <path d="M6 12l-5 5" strokeWidth="1.900" />
    </svg>
  );
}
function TaskView() {
  return (
    <svg width="30" height="29" viewBox="0 0 30 29">
      <rect x="8" y="0" width="22" height="20" rx="2" fill="#f3f5f4" />
      <rect x="0" y="8" width="22" height="21" rx="2" fill="#2a2a2a" />
      <rect x="8" y="8" width="14" height="12" fill="#c8c8c8" />
    </svg>
  );
}
function ExplorerFolder() {
  return (
    <svg width="30" height="28" viewBox="0 0 30 28">
      <path d="M0 2a2 2 0 012-2h9l3 3h14a2 2 0 012 2v4H0z" fill="#e6a823" />
      <path d="M0 6h30v20a2 2 0 01-2 2H2a2 2 0 01-2-2z" fill="#fcd253" />
      <path d="M5 28v-6a2 2 0 012-2h16a2 2 0 012 2v6z" fill="#1a6ec2" />
    </svg>
  );
}
function EdgeLogo() {
  return (
    <svg width="32" height="32" viewBox="0 0 32 32">
      <defs>
        <linearGradient id="edgeB" x1="0" y1="0" x2="0" y2="1">
          <stop offset="0" stopColor="#1aa0d8" />
          <stop offset="1" stopColor="#0c5fa8" />
        </linearGradient>
        <linearGradient id="edgeG" x1="0" y1="0" x2="1" y2="1">
          <stop offset="0" stopColor="#2fb9c6" />
          <stop offset="1" stopColor="#6ae06a" />
        </linearGradient>
      </defs>
      <circle cx="16" cy="16" r="15.500" fill="url(#edgeB)" />
      <path d="M1 13C3 5 10 .5 16 .5 26 .5 31.500 9 31.500 16c0 5-4 7-8 7-5 0-8-2-7-6 1-2 0-7-5-7-4 0-8 1-10.500 3z" fill="url(#edgeG)" />
      <path d="M12 17c-1 6 5 12 12 12 1 0 2 0 3-1-3 3-8 3.500-12 2.500C8 29 6 21 12 17z" fill="#b5e3f5" />
    </svg>
  );
}
const AppTile = styled.div<{ $dark?: boolean }>`
  position: relative;
  width: 30px;
  height: 30px;
  display: flex;
  flex-direction: column;
  align-items: center;
  justify-content: flex-end;
  overflow: hidden;
  background: ${(p) => (p.$dark ? "#0c0c0c" : "#fbfbfb")};
`;
const TileLabel = styled.div`
  color: #fff;
  font-size: 11.500px;
  font-weight: 700;
  line-height: 12px;
`;
const HaoWord = styled.div`
  color: #5fa336;
  font-size: 14px;
  font-weight: 500;
  line-height: 13px;
`;
const HaoNum = styled.div`
  color: #e8a04f;
  font-size: 11px;
  font-weight: 500;
  line-height: 12px;
  padding-bottom: 3px;
`;
function BaiduPaw() {
  return (
    <svg width="30" height="30" viewBox="0 0 30 30">
      <ellipse cx="9" cy="7" rx="2.500" ry="3.500" fill="#2a5fc4" />
      <ellipse cx="20" cy="7" rx="2.500" ry="3.500" fill="#2a5fc4" />
      <ellipse cx="4" cy="13" rx="2.500" ry="3" fill="#2a5fc4" />
      <ellipse cx="25" cy="13" rx="2.500" ry="3" fill="#2a5fc4" />
      <path d="M15 9c5 0 9 6 10 10 1 5-3 7-10 7S4 24 5 19c1-4 5-10 10-10z" fill="#2a5fc4" />
      <text x="15" y="23" fontSize="10" fontWeight="700" textAnchor="middle" fill="#fff" fontFamily="Noto Sans">du</text>
      <rect x="8" y="28" width="7" height="2" fill="#d33" />
      <rect x="15" y="28" width="7" height="2" fill="#2a5fc4" />
    </svg>
  );
}
function WbMark() {
  return (
    <svg width="24" height="17" viewBox="0 0 24 17" fill="none" stroke="#d9a63a" strokeWidth="1.400">
      <path d="M12 1l4 2v4l-4 2-4-2V3zM7 8l4 2v4l-4 2-4-2v-4zM17 8l4 2v4l-4 2-4-2v-4z" />
    </svg>
  );
}
function DmMark() {
  return (
    <svg width="24" height="18" viewBox="0 0 24 18" fill="none" stroke="#eea91e" strokeWidth="2.600">
      <path d="M5 1v16l15-8z" />
      <path d="M10 6v6l5-3z" strokeWidth="1.500" />
    </svg>
  );
}
function SecurityBall() {
  return (
    <svg width="21" height="21" viewBox="0 0 21 21">
      <circle cx="10.500" cy="10.500" r="10" fill="#2fa34a" />
      <circle cx="10.500" cy="10.500" r="7.500" fill="#f0e02c" />
      <path d="M10.500 6v9M6 10.500h9" stroke="#1f8a3a" strokeWidth="2" />
    </svg>
  );
}
function SyncBadge() {
  return (
    <svg width="21" height="22" viewBox="0 0 21 22" fill="none" stroke="#333" strokeWidth="1.200">
      <path d="M2 10a8 8 0 0115-4M17 2v4h-4M14 19a8 8 0 01-11-2M1 20v-4h4" />
      <circle cx="15" cy="15" r="5" fill="#ee8a1f" stroke="none" />
    </svg>
  );
}
function Battery() {
  return (
    <svg width="21" height="12" viewBox="0 0 21 12">
      <rect x="1" y="1" width="16" height="10" rx="2.500" fill="none" stroke="#222" strokeWidth="1.300" />
      <rect x="3" y="3" width="10" height="6" fill="#222" />
      <rect x="18.500" y="4" width="2" height="4" fill="#222" />
    </svg>
  );
}
function MessageBadge() {
  return (
    <svg width="20" height="22" viewBox="0 0 20 22">
      <path d="M1 7h18v9H8l-4 5v-5H1z" fill="#e8b91e" />
      <rect x="8" y="1" width="5" height="11" rx="2.500" fill="#333" stroke="#fff" />
    </svg>
  );
}

/* ---------- viewport scene, drawn in page coordinates ---------- */
function ViewportScene() {
  return (
    <Scene width="1248" height="550" viewBox="129 212 1248 550">
      <defs>
        <linearGradient id="tube" gradientUnits="userSpaceOnUse" x1="639" y1="369" x2="700" y2="430">
          <stop offset="0" stopColor="#5e5e5e" />
          <stop offset=".2" stopColor="#808080" />
          <stop offset=".55" stopColor="#a4a4a4" />
          <stop offset=".85" stopColor="#8a8a8a" />
          <stop offset="1" stopColor="#707070" />
        </linearGradient>
      </defs>
      <path d="M733 277A43 14 45 0 1 793 338L607 523L545 462Z" fill="url(#tube)" />
      <path d="M733 277A43 14 45 0 1 793 338" fill="none" stroke="#e6ecf8" strokeWidth="1.200" />
      <ellipse cx="576" cy="492.500" rx="44" ry="14" transform="rotate(45 576 492.500)" fill="#727272" stroke="#d8d8d8" strokeWidth="1.100" />
      <ellipse cx="577" cy="491.500" rx="39" ry="10" transform="rotate(45 577 491.500)" fill="#a6a6a6" stroke="#eeeeee" strokeDasharray="7 3" />

      <g fontFamily="Noto Sans" fontSize="12" fill="#222" textAnchor="middle">
        <text x="574.500" y="707">0.00</text>
        <text x="751" y="707">20.00</text>
        <text x="928" y="707">40.00</text>
        <text x="964.500" y="707" fontSize="12.500" fill="#444">(mm)</text>
        <text x="663" y="737">10.00</text>
        <text x="840" y="737">30.00</text>
      </g>
      <rect x="575.500" y="712" width="354" height="10" fill="#fff" stroke="#222" />
      <rect x="575" y="712" width="89" height="10.500" fill="#000" />
      <rect x="752" y="712" width="89" height="10.500" fill="#000" />

      <path d="M1283 673L1276 655" stroke="#1e6a20" strokeWidth="3.500" />
      <circle cx="1276" cy="653" r="7" fill="#0d7f24" />
      <path d="M1283 673L1245 711" stroke="#0a0ab8" strokeWidth="4" />
      <path d="M1238 718l5-15 9 10z" fill="#0a0ab8" />
      <path d="M1283 673L1322 707" stroke="#b81414" strokeWidth="4" />
      <path d="M1330 714l-15-4 8-11z" fill="#cc1010" />
      <circle cx="1278" cy="702.500" r="7" fill="#2cc0d2" />
      <g fontFamily="Noto Sans" fontSize="12">
        <text x="1275" y="645" textAnchor="middle" fill="#2a9a44">Y</text>
        <text x="1231" y="728" textAnchor="middle" fill="#2020b0">Z</text>
        <text x="1342" y="722" textAnchor="middle" fill="#dd3030">X</text>
      </g>
    </Scene>
  );
}

export default function App() {
  return (
    <>
      <GlobalStyle />
      <Page>
        <TitleBar>
          <ContextTab>环境</ContextTab>
          <WindowTitle>B : LS-DYNA - Mechanical [ANSYS Mechanical Enterprise PrepPost]</WindowTitle>
          <MinDash />
        </TitleBar>

        <TabRow>
          <Tab $w={48} $start>主页</Tab>
          <Tab $w={61} $active>环境</Tab>
          <Tab $w={65}>显示</Tab>
          <Tab $w={62}>选择</Tab>
          <Tab $w={79}>自动化</Tab>
          <Tab $w={115}>LSDYNA Pre</Tab>
          <QuickStart>快速启动</QuickStart>
        </TabRow>

        <Ribbon>
          <RibbonGroup $w={65}>
            <GroupBody>
              <LargeButton $w={65}>
                <LargeIcon><Bolt /></LargeIcon>
                <LargeText>求解</LargeText>
                <DropCaret />
              </LargeButton>
            </GroupBody>
            <GroupLabel>求解<Launcher /></GroupLabel>
          </RibbonGroup>
          <RibbonSep />

          <RibbonGroup $w={409}>
            <GroupBody>
              <LargeButton $w={65}>
                <LargeIcon><AnalysisGrid /></LargeIcon>
                <LargeText>分析</LargeText>
                <DropCaret />
              </LargeButton>
              <SmallGrid $cols="85px 72px 57px 60px" $row={36} $mt={2}>
                <SmallButton $off><NamedSel />命名选择</SmallButton>
                <SmallButton $off><RemotePoint />远程点</SmallButton>
                <SmallButton><CommentIcon />评论</SmallButton>
                <SmallButton><CameraIcon />图像<TinyCaret /></SmallButton>
                <SmallButton $off><CoordIcon />坐标系</SmallButton>
                <SmallButton><CommandIcon />命令</SmallButton>
                <SmallButton $gap={2}><BarsIcon />图表</SmallButton>
                <SmallButton><SectionIcon />截面</SmallButton>
              </SmallGrid>
              <SmallButton $alone $ml={12}><NoteIcon />注释</SmallButton>
            </GroupBody>
            <GroupLabel>插入</GroupLabel>
          </RibbonGroup>
          <RibbonSep />

          <RibbonGroup $w={65}>
            <GroupBody>
              <LargeButton $w={65}>
                <LargeIcon><Inertia /></LargeIcon>
                <LargeText>惯性</LargeText>
                <DropCaret />
              </LargeButton>
            </GroupBody>
          </RibbonGroup>
          <RibbonSep />

          <RibbonGroup $w={489}>
            <GroupBody>
              <LargeButton $w={64}>
                <LargeIcon><LoadCube /></LargeIcon>
                <LargeText>载荷</LargeText>
                <DropCaret />
              </LargeButton>
              <SmallGrid $cols="58px 56px" $row={27} $mt={-0.5}>
                <SmallButton $gap={3}><SmallCube face="#18c018" />力</SmallButton>
                <SmallButton $gap={3}><SmallCube face="#18c018" />压力</SmallButton>
                <SmallButton $off $gap={3}><SmallCube face="#ddd" />力矩</SmallButton>
              </SmallGrid>
              <RibbonSep $short />
              <LargeButton $w={60}>
                <LargeIcon><SupportCube /></LargeIcon>
                <LargeText>支撑</LargeText>
                <DropCaret />
              </LargeButton>
              <SmallGrid $cols="71px 56px" $row={27} $mt={-0.5}>
                <SmallButton $gap={3}><SmallCube face="#1c8ce6" dash />固定的</SmallButton>
                <SmallButton $gap={3}><SmallCube face="#1c8ce6" />位移</SmallButton>
                <SmallButton $off $gap={3}><FrictionlessIcon />无摩擦</SmallButton>
              </SmallGrid>
              <RibbonSep $short />
              <LargeButton $w={60}>
                <LargeIcon><Conditions /></LargeIcon>
                <LargeText>条件</LargeText>
                <DropCaret />
              </LargeButton>
              <RibbonSep $short />
              <LargeButton $w={61}>
                <LargeIcon><DirectFe /></LargeIcon>
                <LargeText>直接FE</LargeText>
                <DropCaret />
              </LargeButton>
            </GroupBody>
            <GroupLabel>结构</GroupLabel>
          </RibbonGroup>
          <RibbonSep />

          <RibbonGroup $w={101}>
            <GroupBody>
              <LargeButton $w={89} $ml={7} $hl>
                <LargeIcon><DropTest /></LargeIcon>
                <LargeText>坠落测试向导</LargeText>
              </LargeButton>
            </GroupBody>
            <GroupLabel>坠落测试</GroupLabel>
          </RibbonGroup>
          <RibbonSep />

          <RibbonGroup $w={421}>
            <GroupBody>
              <LargeButton $w={145} $ml={9}>
                <LargeIcon><MapdlDoc /></LargeIcon>
                <LargeText>生成MAPDL输入文件...</LargeText>
              </LargeButton>
              <LargeButton $w={106} $ml={6} $off>
                <LargeIcon $off><NasDoc /></LargeIcon>
                <LargeText>导出Nastran文件</LargeText>
              </LargeButton>
              <LargeButton $w={131} $ml={7}>
                <LargeIcon><DropTest /></LargeIcon>
                <LargeText>关键词管理器（Beta)</LargeText>
              </LargeButton>
            </GroupBody>
            <GroupLabel>工具</GroupLabel>
          </RibbonGroup>
          <RibbonSep />

          <RibbonGroup $w={172}>
            <GroupBody>
              <LargeButton $w={60} $off>
                <LargeIcon $off><WorksheetDoc /></LargeIcon>
                <LargeText>工作表</LargeText>
              </LargeButton>
              <LargeButton $w={52} $sel>
                <LargeIcon><TrendChart /></LargeIcon>
                <LargeText>图形</LargeText>
              </LargeButton>
              <LargeButton $w={60} $sel>
                <LargeIcon><DataTable /></LargeIcon>
                <LargeText>表格数据</LargeText>
              </LargeButton>
            </GroupBody>
            <GroupLabel>浏览</GroupLabel>
          </RibbonGroup>
        </Ribbon>

        <Workspace>
          <LeftColumn>
            <LeftHead $h={34} $top>
              <DotStrip />
              <DockControls />
            </LeftHead>
            <FilterRow>
              <FilterBox><Caret /></FilterBox>
              <ChevronColumn>
                <Chevrons />
                <Caret />
              </ChevronColumn>
            </FilterRow>
            <Tree>
              <TreeRow $pad={-24} $bold>模型 (B4)</TreeRow>
              <TreeRow $pad={7}>几何结构导入</TreeRow>
              <TreeRow $pad={7}>几何结构</TreeRow>
              <TreeRow>
                <TreeIcons $w={41}><TreeDots $w={4} /><Check /><SolidCube /></TreeIcons>固体
              </TreeRow>
              <TreeRow $pad={7}>材料</TreeRow>
              <TreeRow $pad={7}>坐标系</TreeRow>
              <TreeRow $pad={7}>网格</TreeRow>
              <TreeRow $pad={7} $bold><TreeHighlight>LS-DYNA (B5)</TreeHighlight></TreeRow>
              <TreeRow>
                <TreeIcons $w={41}><TreeDots $w={4} /><Check /><TreeFolder accent="#f3e3b4" glyph="T=0" /></TreeIcons>初始条件
              </TreeRow>
              <TreeRow>
                <TreeIcons $w={41}><TreeDots $w={5} /><Status $c="#24408f">?</Status><SettingsGrid /></TreeIcons>分析设置
              </TreeRow>
              <TreeRow $bold>
                <TreeIcons $w={41}><TreeDots $w={5} /><Status $c="#24408f">?</Status><TreeFolder accent="#7fb07a" /></TreeIcons>求解 (B6)
              </TreeRow>
              <TreeRow>
                <TreeIcons $w={75} $pr={6}><TreeExpand>+</TreeExpand><TreeDots $w={12} /><BoltSmall /><TreeFolder accent="#f6efc8" glyph="i" /></TreeIcons>求解方案信息
              </TreeRow>
            </Tree>
            <ScrollStrip><ScrollThumb /></ScrollStrip>
            <PropHead $h={26}>
              <span>5)"的</span>
              <DotStrip />
              <DockControls />
            </PropHead>
            <PropTable>
              <PropRow><PropBlank /></PropRow>
              <PropRow><PropName /><PropValue $shade>结构</PropValue></PropRow>
              <PropRow><PropName /><PropValue $shade>显式动力学</PropValue></PropRow>
              <PropRow><PropName /><PropValue $shade>LSDYNA@L...</PropValue></PropRow>
              <PropRow><PropBlank /></PropRow>
              <PropRow><PropName $pr={22}>温度</PropName><PropValue>22. °C</PropValue></PropRow>
              <PropRow><PropName>文件</PropName><PropValue $shade>否</PropValue></PropRow>
            </PropTable>
            <PropBlank />
          </LeftColumn>

          <CenterColumn>
            <Toolbar>
              <Grip />
              <Tool><Mag dot="#e6b93a" /></Tool>
              <Tool><Mag dot="#dcdcdc" off /></Tool>
              <Tool $ml={7} $sel><BoxShade a="#9a9a9a" b="#555" c="#3c3c3c" /></Tool>
              <Tool $w={27}><BoxShade a="#c8c8c8" b="#9a9a9a" c="#7a7a7a" /></Tool>
              <Tool><ExplodeBox /></Tool>
              <ToolSep $ml={2} />
              <Tool $ml={4}><FitIcon /></Tool>
              <Tool><FitIcon off /></Tool>
              <ToolSep $ml={2} />
              <Tool $ml={3}><RotateIcon /></Tool>
              <Tool $w={14}><TinyCaret /></Tool>
              <Tool $w={27}><PanIcon /></Tool>
              <Tool $w={27}><Mag dot="#e6c65a" /></Tool>
              <Tool><Mag dot="#e6b93a" /></Tool>
              <Tool><Mag dot="#6f8fd8" /></Tool>
              <Tool $w={27}><Mag dot="#5fb56f" /></Tool>
              <ToolSep $ml={4} />
              <ToolText $w={31} $ml={7}>选择</ToolText>
              <Tool $w={17} $ml={9}><PickMode /></Tool>
              <ToolText $w={29} $ml={6}>模式</ToolText>
              <Tool $w={10} $ml={2}><TinyCaret /></Tool>
              <Tool $w={27} $ml={8} $sel><NodeFaces /></Tool>
              <Tool><FaceBox mode="edge" /></Tool>
              <Tool><FaceBox mode="side" /></Tool>
              <Tool $w={27}><FaceBox mode="top" /></Tool>
              <Tool $w={27}><FaceBox mode="solid" /></Tool>
              <Tool><FaceBox mode="mesh1" /></Tool>
              <Tool><FaceBox mode="mesh2" /></Tool>
              <Tool $w={27}><FaceBox mode="mesh3" /></Tool>
              <Tool $w={27}><PointProbe label="X,Y,Z" /></Tool>
              <Tool><ProbeTag /></Tool>
              <Tool $w={27}><LabelTag /></Tool>
              <ToolSep $ml={4} />
              <ClipboardButton>
                <ClipboardIcon />
                <ClipLabel>剪贴板</ClipLabel>
                <ToolCaret />
              </ClipboardButton>
              <ToolText $w={34} $ml={6}>[ 空 ]</ToolText>
              <ToolSep $ml={9} />
              <Tool $w={18} $ml={6}><ExtendCube /></Tool>
              <ToolText $w={31} $ml={4}>扩展</ToolText>
              <Tool $w={12}><TinyCaret /></Tool>
              <Tool $w={16} $ml={12}><LocationPin /></Tool>
              <ToolText $w={60} $ml={6}>选择依据</ToolText>
              <Tool $w={12}><TinyCaret /></Tool>
              <Tool $w={54} />
              <ToolbarEnd>
                <Chevrons />
                <Caret />
              </ToolbarEnd>
            </Toolbar>

            <CenterBody>
              <Viewport>
                <ViewportScene />
                <BrandMark>
                  <BrandName>Λnsys</BrandName>
                  <BrandRelease>2022 R1</BrandRelease>
                </BrandMark>
                <Watermark>小汪学知识</Watermark>
              </Viewport>

              <BottomRow>
                <BottomPanel $w={621}>
                  <PanelHead $h={26}>
                    图形
                    <DotStrip />
                    <DockControls />
                  </PanelHead>
                  <PanelBodyGraph>
                    <PlotFrame>
                      <PlotTick>1.</PlotTick>
                      <PlotLimit />
                    </PlotFrame>
                  </PanelBodyGraph>
                </BottomPanel>
                <BottomPanel $w={622}>
                  <PanelHead $h={26}>
                    表格数据
                    <DotStrip />
                    <DockControls />
                  </PanelHead>
                  <PanelBodyGrey />
                </BottomPanel>
              </BottomRow>
            </CenterBody>
          </CenterColumn>

          <RightColumn>
            <WizardHead $h={28}>
              Wizard
              <DotStrip />
            </WizardHead>
            <WizardBody />
          </RightColumn>
        </Workspace>

        <StatusBar>
          <StatusItem $w={67}><MessageBadge />无消息</StatusItem>
          <StatusItem $ml={23} $w={44}>无选择</StatusItem>
          <StatusItem $ml={30} $w={285} $ls={0.25}>
            <svg width="11" height="7" viewBox="0 0 11 7"><path d="M0 7L5.500 0 11 7z" fill="#fff" /></svg>
            &nbsp;&nbsp;度量标准（mm、kg、N、s、mV、mA）
          </StatusItem>
          <StatusItem $ml={29} $w={30}>弧度</StatusItem>
          <StatusItem $ml={21}>RPM</StatusItem>
        </StatusBar>

        <Taskbar>
          <TaskSlot><StartLogo /></TaskSlot>
          <SearchPill><SearchGlass />搜索</SearchPill>
          <TaskSlot><TaskView /></TaskSlot>
          <TaskSlot><ExplorerFolder /></TaskSlot>
          <TaskSlot><EdgeLogo /><TaskDot /></TaskSlot>
          <TaskSlot><AppTile><BaiduPaw /></AppTile></TaskSlot>
          <TaskSlot><AppTile><HaoWord>hǎo</HaoWord><HaoNum>123</HaoNum></AppTile></TaskSlot>
          <TaskSlot><AppTile $dark><WbMark /><TileLabel>WB</TileLabel></AppTile><TaskDot /></TaskSlot>
          <TaskSlot $active><AppTile $dark><DmMark /><TileLabel>DM</TileLabel></AppTile><TaskDot $active /></TaskSlot>
          <Tray>
            <TrayItem $w={30}><ChevronUp size={20} strokeWidth={1.5} /></TrayItem>
            <TrayItem $w={30}><SecurityBall /></TrayItem>
            <TrayItem $w={30}><SyncBadge /></TrayItem>
            <TrayItem $w={40}><Mic size={20} strokeWidth={1.6} color="#2c6fc2" /></TrayItem>
            <TrayItem $w={38}>中</TrayItem>
            <TrayItem $w={40}><Wifi size={19} strokeWidth={1.6} /></TrayItem>
            <TrayItem $w={28}><Volume1 size={19} strokeWidth={1.5} /></TrayItem>
            <TrayItem $w={32}><Battery /></TrayItem>
            <Clock>2023</Clock>
          </Tray>
        </Taskbar>

        <Cursor width="16" height="24" viewBox="0 0 16 24">
          <path d="M1 1v18l4.500-4 3 7 3-1.500-3-6.500h6z" fill="#fff" stroke="#111" strokeWidth="1.200" />
        </Cursor>
      </Page>
    </>
  );
}
